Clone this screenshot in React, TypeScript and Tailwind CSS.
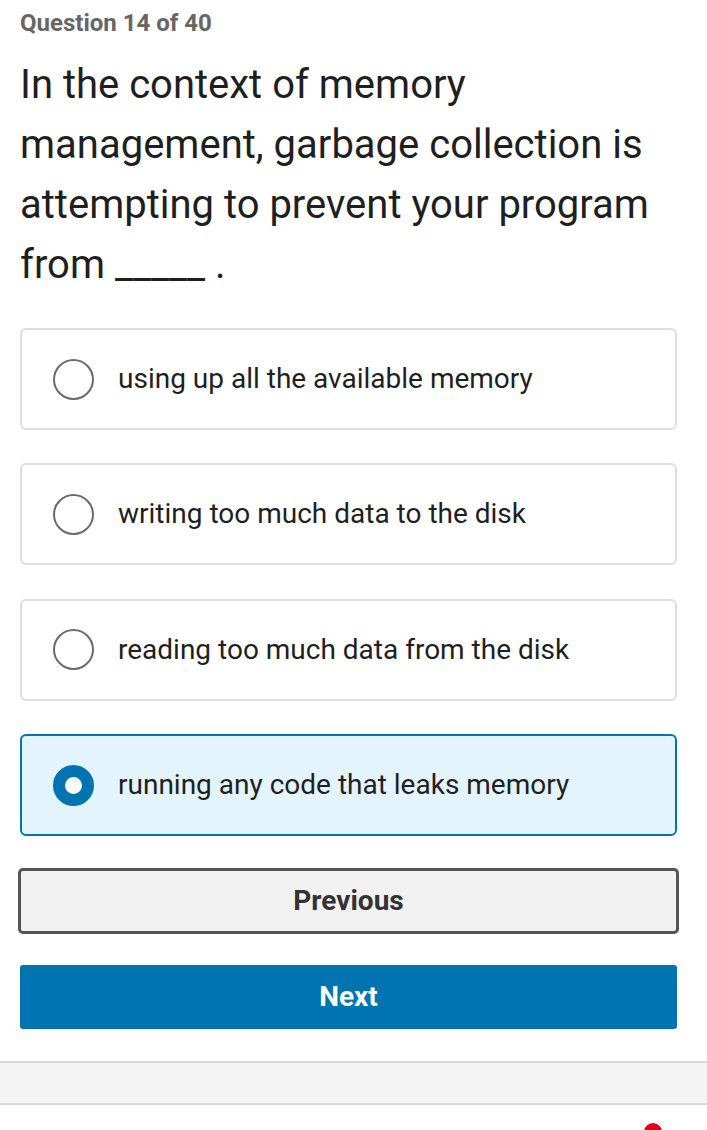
import React from "react";

const options = [
  "using up all the available memory",
  "writing too much data to the disk",
  "reading too much data from the disk",
  "running any code that leaks memory",
];

export default function App() {
  const selected = 3;
  return (
    <div className="w-[707px] h-[1130px] overflow-hidden bg-white font-['Roboto',sans-serif] relative">
      <div className="px-[20px] pt-[8px]">
        <div className="text-[24px] font-bold text-[#666666] leading-[30px]">Question 14 of 40</div>
        <div className="mt-[17px] text-[40px] leading-[60px] text-[#1f1f1f] pr-[10px]">
          In the context of memory management, garbage collection is attempting to prevent your program from _____ .
        </div>
        <div className="mt-[33px] flex flex-col gap-[33.4px]">
          {options.map((o, i) => {
            const sel = i === selected;
            return (
              <div
                key={i}
                className={
                  sel
                    ? "w-[657px] h-[102px] rounded-[6px] border-2 border-[#0073b1] bg-[#e3f4fc] flex items-center pl-[31px]"
                    : "w-[657px] h-[102px] rounded-[6px] border-2 border-[#dedede] bg-white flex items-center pl-[31px]"
                }
              >
                {sel ? (
                  <div className="w-[41px] h-[41px] rounded-full border-[12px] border-[#0073b1] bg-white shrink-0" />
                ) : (
                  <div className="w-[41px] h-[41px] rounded-full border-2 border-[#6b6b6b] bg-white shrink-0" />
                )}
                <span className="ml-[24px] text-[28px] text-[#1f1f1f]">{o}</span>
              </div>
            );
          })}
        </div>
        <button className="block mt-[32px] -ml-[2px] w-[661px] h-[66px] rounded-[5px] border-[3px] border-[#555555] bg-[#f2f2f2] text-[28px] font-bold text-[#333333]">
          Previous
        </button>
        <button className="block mt-[31px] w-[657px] h-[64px] rounded-[3px] bg-[#0073b1] text-[28px] font-bold text-white">
          Next
        </button>
      </div>
      <div className="mt-[32px] h-[44px] border-t-2 border-b-2 border-[#d9d9d9] bg-[#f4f4f4]" />
      <div className="absolute left-[644px] top-[1123px] w-[18px] h-[18px] rounded-full bg-[#e0001b]" />
    </div>
  );
}
